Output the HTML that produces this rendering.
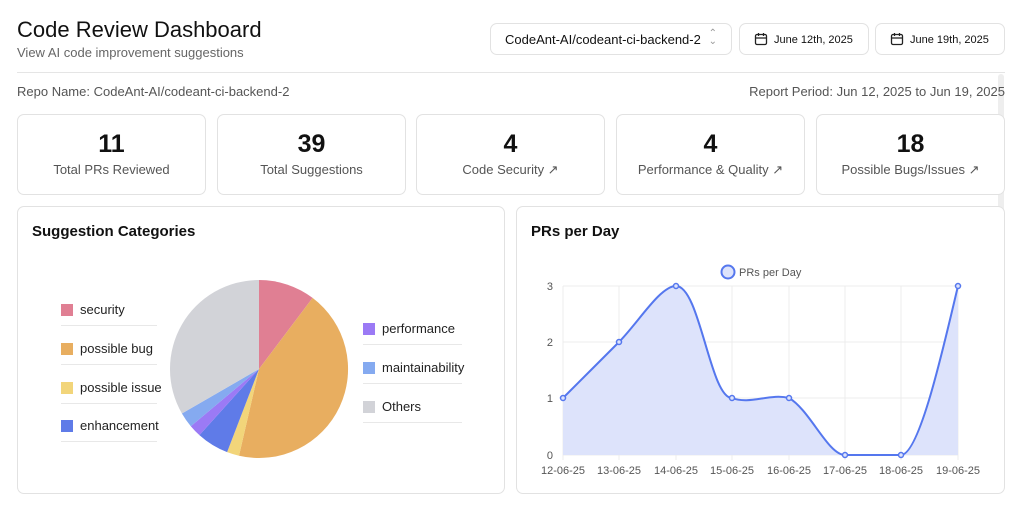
<!DOCTYPE html>
<html><head><meta charset="utf-8"><style>
*{box-sizing:border-box;margin:0;padding:0}
body{width:1024px;height:508px;overflow:hidden;background:#fff;font-family:"Liberation Sans",sans-serif;color:#111;position:relative}
.abs{position:absolute}
.box{position:absolute;border:1px solid #e2e2e2;border-radius:7px;background:#fff}
.stat{top:114px;height:81px;text-align:center}
.stat b{display:block;font-size:25px;margin-top:15px;line-height:28px}
.stat span{display:block;font-size:13px;color:#555;margin-top:4px}
.leg{position:absolute;font-size:13px;color:#222;width:96px;border-bottom:1px solid #e8e8e8;height:24px;white-space:nowrap}
.leg i{position:absolute;left:0;top:2px;width:12px;height:12px}
.leg span{position:absolute;left:19px;top:-1px;line-height:18px}
</style></head><body>
<div class="abs" style="left:17px;top:17px;font-size:22px;font-weight:500">Code Review Dashboard</div>
<div class="abs" style="left:17px;top:45px;font-size:13px;color:#666">View AI code improvement suggestions</div>
<div class="box" style="left:490px;top:23px;width:242px;height:32px;font-size:13px;padding:8px 0 0 14px">CodeAnt-AI/codeant-ci-backend-2<span style="position:absolute;right:14px;top:6px;color:#999;font-size:10px;line-height:8px">⌃<br>⌄</span></div>
<div class="box" style="left:739px;top:23px;width:130px;height:32px;font-size:11px;padding:10px 0 0 34px">June 12th, 2025<svg class="abs" style="left:14px;top:8px" width="14" height="14" viewBox="0 0 14 14" fill="none" stroke="#222" stroke-width="1.3"><rect x="1.5" y="2.5" width="11" height="10" rx="1.5"/><path d="M1.5 6h11M4.5 1v3M9.5 1v3"/></svg></div>
<div class="box" style="left:875px;top:23px;width:130px;height:32px;font-size:11px;padding:10px 0 0 34px">June 19th, 2025<svg class="abs" style="left:14px;top:8px" width="14" height="14" viewBox="0 0 14 14" fill="none" stroke="#222" stroke-width="1.3"><rect x="1.5" y="2.5" width="11" height="10" rx="1.5"/><path d="M1.5 6h11M4.5 1v3M9.5 1v3"/></svg></div>
<div class="abs" style="left:17px;top:72px;width:988px;height:1px;background:#e5e5e5"></div>
<div class="abs" style="left:998px;top:74px;width:6px;height:272px;background:#eee;border-radius:3px"></div>
<div class="abs" style="left:17px;top:84px;font-size:13px;color:#555">Repo Name: CodeAnt-AI/codeant-ci-backend-2</div>
<div class="abs" style="right:19px;top:84px;font-size:13px;color:#555">Report Period: Jun 12, 2025 to Jun 19, 2025</div>
<div class="box stat" style="left:17px;width:189px"><b>11</b><span>Total PRs Reviewed</span></div>
<div class="box stat" style="left:217px;width:189px"><b>39</b><span>Total Suggestions</span></div>
<div class="box stat" style="left:416px;width:189px"><b>4</b><span>Code Security ↗</span></div>
<div class="box stat" style="left:616px;width:189px"><b>4</b><span>Performance &amp; Quality ↗</span></div>
<div class="box stat" style="left:816px;width:189px"><b>18</b><span>Possible Bugs/Issues ↗</span></div>

<div class="box" style="left:17px;top:206px;width:488px;height:288px"></div>
<div class="abs" style="left:32px;top:223px;font-size:15px;font-weight:bold">Suggestion Categories</div>
<div class="leg" style="left:61px;top:302px"><i style="background:#e07f93"></i><span>security</span></div>
<div class="leg" style="left:61px;top:341px"><i style="background:#e8ae60"></i><span>possible bug</span></div>
<div class="leg" style="left:61px;top:380px"><i style="background:#f2d57a"></i><span>possible issue</span></div>
<div class="leg" style="left:61px;top:418px"><i style="background:#5f7be8"></i><span>enhancement</span></div>
<div class="leg" style="left:363px;top:321px;width:99px"><i style="background:#9b7af5"></i><span>performance</span></div>
<div class="leg" style="left:363px;top:360px;width:99px"><i style="background:#85aaf0"></i><span>maintainability</span></div>
<div class="leg" style="left:363px;top:399px;width:99px"><i style="background:#d2d3d8"></i><span>Others</span></div>
<svg class="abs" style="left:0;top:0" width="510" height="508">
<g transform="translate(259,369)">
<path d="M0 0L0 -89A89 89 0 0 1 53.6 -71.1Z" fill="#e07f93"/>
<path d="M0 0L53.6 -71.1A89 89 0 0 1 -20 86.7Z" fill="#e8ae60"/>
<path d="M0 0L-20 86.7A89 89 0 0 1 -31.9 83.1Z" fill="#f2d57a"/>
<path d="M0 0L-31.9 83.1A89 89 0 0 1 -59.6 66.1Z" fill="#5f7be8"/>
<path d="M0 0L-59.6 66.1A89 89 0 0 1 -68.2 57.2Z" fill="#9b7af5"/>
<path d="M0 0L-68.2 57.2A89 89 0 0 1 -77.1 44.5Z" fill="#85aaf0"/>
<path d="M0 0L-77.1 44.5A89 89 0 0 1 0 -89Z" fill="#d2d3d8"/>
</g></svg>

<div class="box" style="left:516px;top:206px;width:489px;height:288px"></div>
<div class="abs" style="left:531px;top:223px;font-size:15px;font-weight:bold">PRs per Day</div>
<svg class="abs" style="left:0;top:0" width="1024" height="508" font-family="Liberation Sans" font-size="11" fill="#555">
<g stroke="#ececec" stroke-width="1">
<path d="M563 286H958M563 342H958M563 398H958M563 455H958"/>
<path d="M563 286V460M619 286V460M676 286V460M732 286V460M789 286V460M845 286V460M901 286V460M958 286V460"/>
</g>
<path d="M563 398C582 379 600 361 619 342C638 323 660 286 676 286C700 286 710 398 732 398C750 405 770 393 789 398C810 410 828 455 845 455L901 455C920 455 945 340 958 286L958 455L563 455Z" fill="#dde3fb"/>
<path d="M563 398C582 379 600 361 619 342C638 323 660 286 676 286C700 286 710 398 732 398C750 405 770 393 789 398C810 410 828 455 845 455L901 455C920 455 945 340 958 286" fill="none" stroke="#5577ee" stroke-width="2"/>
<g fill="#dde3fb" stroke="#5577ee" stroke-width="1.5">
<circle cx="563" cy="398" r="2.5"/><circle cx="619" cy="342" r="2.5"/><circle cx="676" cy="286" r="2.5"/><circle cx="732" cy="398" r="2.5"/><circle cx="789" cy="398" r="2.5"/><circle cx="845" cy="455" r="2.5"/><circle cx="901" cy="455" r="2.5"/><circle cx="958" cy="286" r="2.5"/>
<circle cx="728" cy="272" r="6.5" stroke-width="2"/></g>
<text x="739" y="276">PRs per Day</text>
<g text-anchor="end"><text x="553" y="290">3</text><text x="553" y="346">2</text><text x="553" y="402">1</text><text x="553" y="459">0</text></g>
<g text-anchor="middle"><text x="563" y="474">12-06-25</text><text x="619" y="474">13-06-25</text><text x="676" y="474">14-06-25</text><text x="732" y="474">15-06-25</text><text x="789" y="474">16-06-25</text><text x="845" y="474">17-06-25</text><text x="901" y="474">18-06-25</text><text x="958" y="474">19-06-25</text></g>
</svg>
</body></html>
